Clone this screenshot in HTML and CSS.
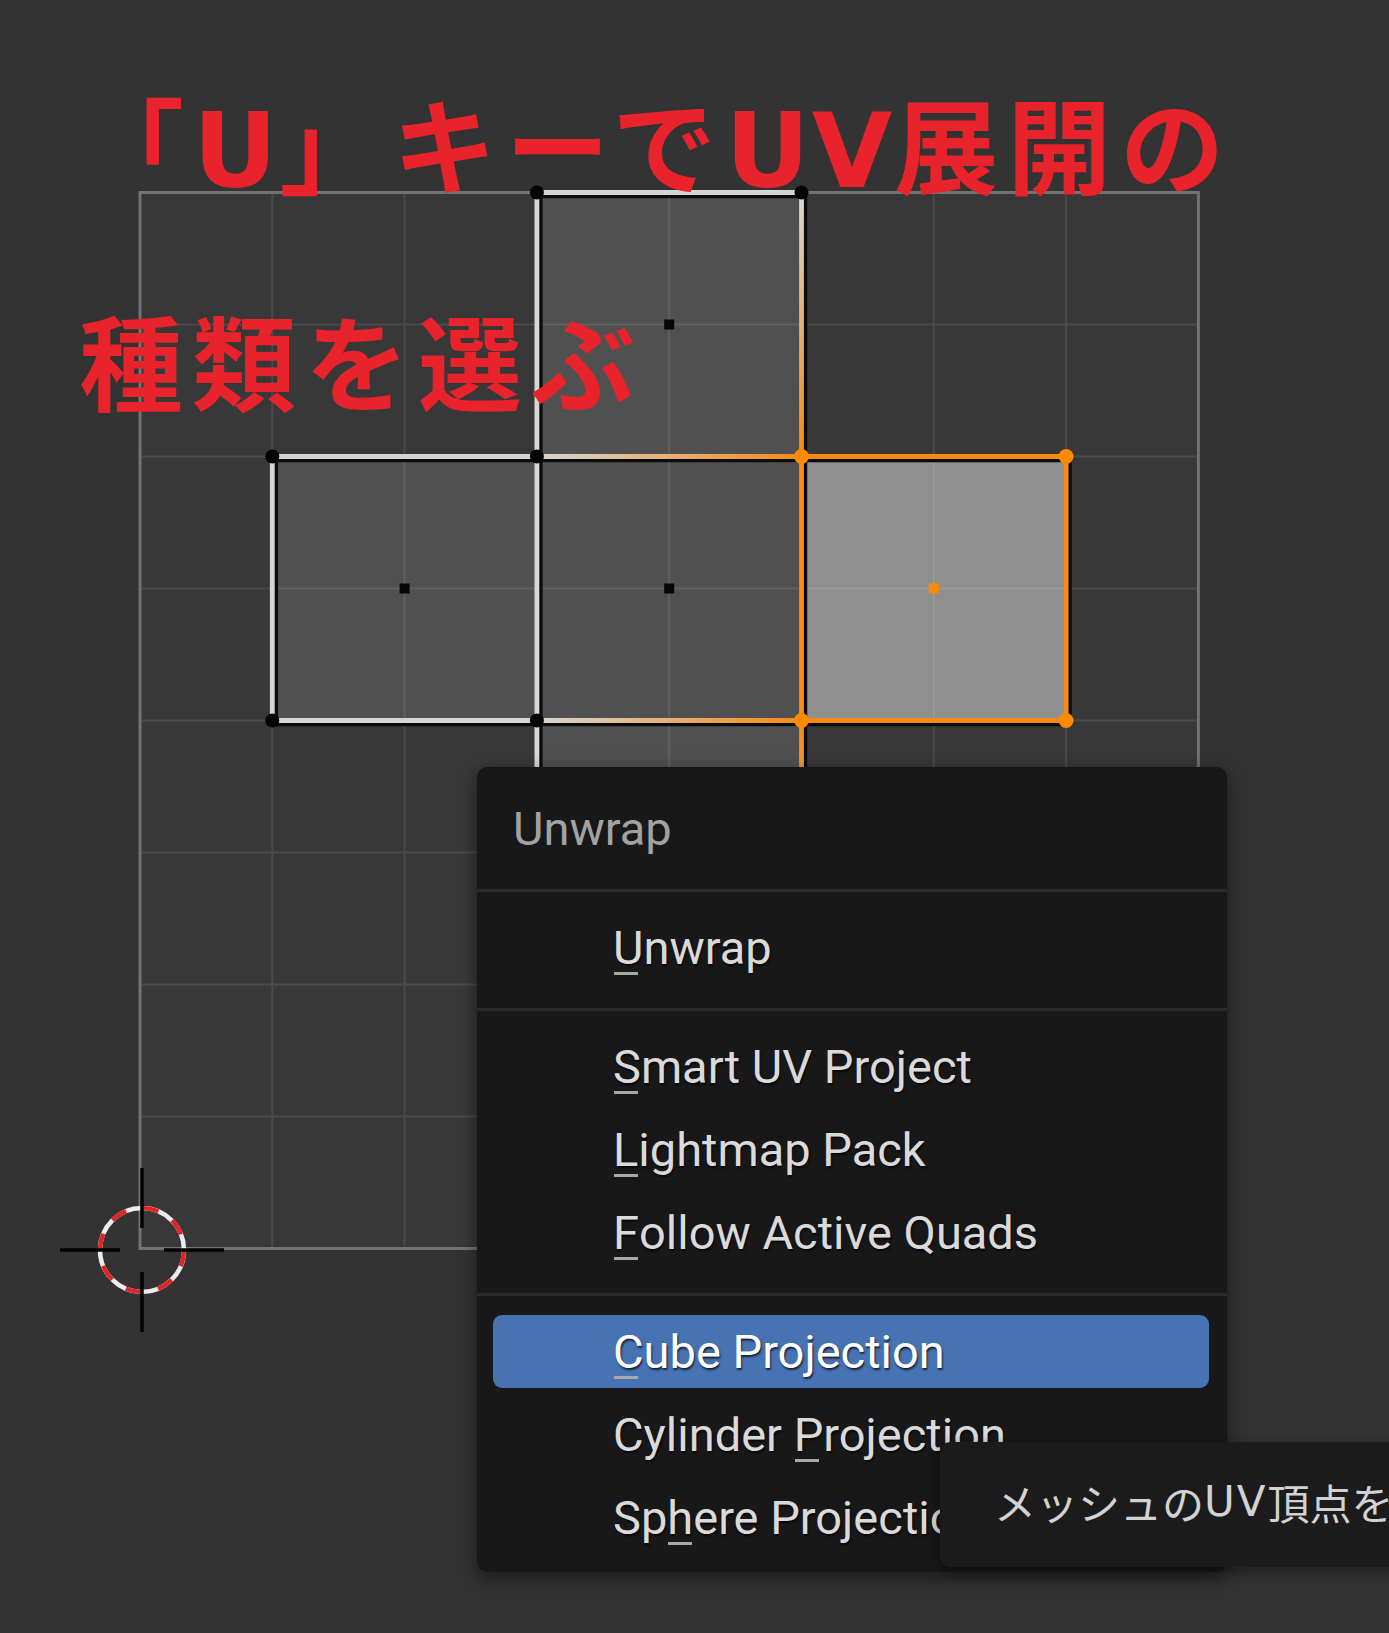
FILE: index.html
```html
<!DOCTYPE html>
<html lang="ja">
<head>
<meta charset="utf-8">
<title>UV Unwrap</title>
<link rel="stylesheet" href="styles.css">
</head>
<body>
<div class="editor">
  <svg class="uv-canvas" width="1389" height="1633" viewBox="0 0 1389 1633" xmlns="http://www.w3.org/2000/svg">
    <defs>
      <linearGradient id="gUpRight" gradientUnits="userSpaceOnUse" x1="801.5" y1="192.5" x2="801.5" y2="456.5">
        <stop offset="0" stop-color="#d6d6d6"/>
        <stop offset="1" stop-color="#f68a12"/>
      </linearGradient>
      <linearGradient id="gMidTop" gradientUnits="userSpaceOnUse" x1="536.9" y1="456.5" x2="801.5" y2="456.5">
        <stop offset="0" stop-color="#d6d6d6"/>
        <stop offset="1" stop-color="#f68a12"/>
      </linearGradient>
      <linearGradient id="gDownRight" gradientUnits="userSpaceOnUse" x1="801.5" y1="720.5" x2="801.5" y2="984.5">
        <stop offset="0" stop-color="#f68a12"/>
        <stop offset="1" stop-color="#d6d6d6"/>
      </linearGradient>
    </defs>

    <!-- UV 0-1 area -->
    <rect x="140" y="192.5" width="1058.4" height="1056" fill="#383838"/>
    <g stroke="#4a4a4a" stroke-width="2">
      <line x1="272.3" y1="192.5" x2="272.3" y2="1248.5"/>
      <line x1="404.6" y1="192.5" x2="404.6" y2="1248.5"/>
      <line x1="536.9" y1="192.5" x2="536.9" y2="1248.5"/>
      <line x1="669.2" y1="192.5" x2="669.2" y2="1248.5"/>
      <line x1="801.5" y1="192.5" x2="801.5" y2="1248.5"/>
      <line x1="933.8" y1="192.5" x2="933.8" y2="1248.5"/>
      <line x1="1066.1" y1="192.5" x2="1066.1" y2="1248.5"/>
      <line x1="140" y1="324.5" x2="1198.4" y2="324.5"/>
      <line x1="140" y1="456.5" x2="1198.4" y2="456.5"/>
      <line x1="140" y1="588.5" x2="1198.4" y2="588.5"/>
      <line x1="140" y1="720.5" x2="1198.4" y2="720.5"/>
      <line x1="140" y1="852.5" x2="1198.4" y2="852.5"/>
      <line x1="140" y1="984.5" x2="1198.4" y2="984.5"/>
      <line x1="140" y1="1116.5" x2="1198.4" y2="1116.5"/>
    </g>
    <rect x="140" y="192.5" width="1058.4" height="1056" fill="none" stroke="#727272" stroke-width="3"/>

    <!-- faces -->
    <g fill="rgba(255,255,255,0.12)">
      <rect x="536.9" y="192.5" width="264.6" height="264"/>
      <rect x="272.3" y="456.5" width="264.6" height="264"/>
      <rect x="536.9" y="456.5" width="264.6" height="264"/>
      <rect x="536.9" y="720.5" width="264.6" height="264"/>
      <rect x="536.9" y="984.5" width="264.6" height="264"/>
    </g>
    <rect x="801.5" y="456.5" width="264.6" height="264" fill="rgba(255,255,255,0.44)"/>

    <!-- edge shadows -->
    <g stroke="#0c0c0c" stroke-width="6.5" transform="translate(2.5 2.5)" stroke-linecap="square">
      <line x1="536.9" y1="192.5" x2="801.5" y2="192.5"/>
      <line x1="536.9" y1="192.5" x2="536.9" y2="1248.5"/>
      <line x1="801.5" y1="192.5" x2="801.5" y2="1248.5"/>
      <line x1="272.3" y1="456.5" x2="1066.1" y2="456.5"/>
      <line x1="272.3" y1="720.5" x2="1066.1" y2="720.5"/>
      <line x1="272.3" y1="456.5" x2="272.3" y2="720.5"/>
      <line x1="1066.1" y1="456.5" x2="1066.1" y2="720.5"/>
    </g>
    <!-- edges -->
    <g stroke-width="4.8">
      <line x1="536.9" y1="192.5" x2="801.5" y2="192.5" stroke="#d6d6d6"/>
      <line x1="536.9" y1="192.5" x2="536.9" y2="1248.5" stroke="#d6d6d6"/>
      <line x1="272.3" y1="456.5" x2="536.9" y2="456.5" stroke="#d6d6d6"/>
      <line x1="272.3" y1="720.5" x2="536.9" y2="720.5" stroke="#d6d6d6"/>
      <line x1="272.3" y1="456.5" x2="272.3" y2="720.5" stroke="#d6d6d6"/>
      <line x1="801.5" y1="192.5" x2="801.5" y2="456.5" stroke="url(#gUpRight)"/>
      <line x1="536.9" y1="456.5" x2="801.5" y2="456.5" stroke="url(#gMidTop)"/>
      <line x1="536.9" y1="720.5" x2="801.5" y2="720.5" stroke="url(#gMidTop)"/>
      <line x1="801.5" y1="720.5" x2="801.5" y2="984.5" stroke="url(#gDownRight)"/>
      <line x1="801.5" y1="984.5" x2="801.5" y2="1248.5" stroke="#d6d6d6"/>
      <g stroke="#f68a12">
        <line x1="801.5" y1="456.5" x2="1066.1" y2="456.5"/>
        <line x1="801.5" y1="720.5" x2="1066.1" y2="720.5"/>
        <line x1="801.5" y1="456.5" x2="801.5" y2="720.5"/>
        <line x1="1066.1" y1="456.5" x2="1066.1" y2="720.5"/>
      </g>
    </g>

    <!-- vertices -->
    <g fill="#050505">
      <circle cx="536.9" cy="192.5" r="7"/>
      <circle cx="801.5" cy="192.5" r="7"/>
      <circle cx="272.3" cy="456.5" r="7"/>
      <circle cx="536.9" cy="456.5" r="7"/>
      <circle cx="272.3" cy="720.5" r="7"/>
      <circle cx="536.9" cy="720.5" r="7"/>
      <circle cx="536.9" cy="984.5" r="7"/>
      <circle cx="801.5" cy="984.5" r="7"/>
    </g>
    <g fill="#ff8a00">
      <circle cx="801.5" cy="456.5" r="7.5"/>
      <circle cx="1066.1" cy="456.5" r="7.5"/>
      <circle cx="801.5" cy="720.5" r="7.5"/>
      <circle cx="1066.1" cy="720.5" r="7.5"/>
    </g>
    <!-- face dots -->
    <g fill="#050505">
      <rect x="664.2" y="319.5" width="10" height="10"/>
      <rect x="399.6" y="583.5" width="10" height="10"/>
      <rect x="664.2" y="583.5" width="10" height="10"/>
    </g>
    <rect x="928.8" y="583.5" width="10" height="10" fill="#ff8a00"/>

    <!-- 2D cursor -->
    <circle cx="142" cy="1250" r="42" fill="none" stroke="#ececec" stroke-width="4.5"/>
    <circle cx="142" cy="1250" r="42" fill="none" stroke="#e0242a" stroke-width="4.5" stroke-dasharray="16.49 16.49"/>
    <g stroke="#000" stroke-width="3.5">
      <line x1="60" y1="1250" x2="120" y2="1250"/>
      <line x1="164" y1="1250" x2="224" y2="1250"/>
      <line x1="142" y1="1168" x2="142" y2="1228"/>
      <line x1="142" y1="1272" x2="142" y2="1332"/>
    </g>
  </svg>

  <div class="note note-1">「<span class="note-latin">U</span>」キーで<span class="note-latin">UV</span>展開の</div>
  <div class="note note-2">種類を選ぶ</div>

  <div class="menu">
    <div class="menu-title">Unwrap</div>
    <div class="sep"></div>
    <div class="item"><span class="label"><span class="mn">U</span>nwrap</span></div>
    <div class="sep"></div>
    <div class="item"><span class="label"><span class="mn">S</span>mart UV Project</span></div>
    <div class="item"><span class="label"><span class="mn">L</span>ightmap Pack</span></div>
    <div class="item"><span class="label"><span class="mn">F</span>ollow Active Quads</span></div>
    <div class="sep"></div>
    <div class="item active"><span class="label"><span class="mn">C</span>ube Projection</span></div>
    <div class="item"><span class="label">Cylinder <span class="mn">P</span>rojection</span></div>
    <div class="item"><span class="label">Sp<span class="mn">h</span>ere Projection</span></div>
  </div>

  <div class="tooltip">メッシュの<span class="tip-latin">UV</span>頂点を立方体に投影</div>
</div>
</body>
</html>
```

FILE: styles.css
```css
html, body {
  margin: 0;
  padding: 0;
  background: #333333;
  overflow: hidden;
}

.editor {
  position: relative;
  width: 1389px;
  height: 1633px;
  overflow: hidden;
  background: #333333;
}

.uv-canvas {
  position: absolute;
  left: 0;
  top: 0;
  display: block;
}

.note {
  position: absolute;
  font-family: "Noto Sans CJK JP", "Noto Sans", sans-serif;
  font-weight: 700;
  font-size: 104px;
  line-height: 1;
  letter-spacing: 9px;
  color: #e8232b;
  white-space: nowrap;
}

.note-latin {
  font-family: "DejaVu Sans", "Noto Sans CJK JP", sans-serif;
  letter-spacing: 2px;
}

.note-1 {
  left: 80px;
  top: 90px;
}

.note-2 {
  left: 79px;
  top: 307px;
}

.menu {
  position: absolute;
  left: 477px;
  top: 767px;
  width: 750px;
  height: 805px;
  box-sizing: border-box;
  padding: 20px 0 13px;
  display: flex;
  flex-direction: column;
  background: #181818;
  border-radius: 10px;
  box-shadow: 0 6px 18px rgba(0, 0, 0, 0.5);
  font-family: Roboto, "Liberation Sans", sans-serif;
  font-size: 47px;
}

.menu-title {
  height: 83px;
  flex: none;
  display: flex;
  align-items: center;
  padding-left: 36px;
  color: #a2a2a2;
}

.sep {
  flex: none;
  height: 3px;
  margin: 19px 0 14px;
  background: #2b2b2b;
}

.item {
  flex: none;
  height: 83px;
  box-sizing: border-box;
  padding: 5px 18px 5px 16px;
  display: flex;
}

.label {
  flex: 1;
  display: flex;
  align-items: center;
  padding-left: 120px;
  border-radius: 9px;
  color: #dadada;
  white-space: pre;
  text-shadow: 1px 2px 2px rgba(0, 0, 0, 0.7);
}

.item.active .label {
  background: #4772b3;
  color: #ffffff;
}

.mn {
  position: relative;
}

.mn::after {
  content: "";
  position: absolute;
  left: 1px;
  bottom: 0;
  width: 24px;
  height: 3px;
  background: #a8a8a8;
}

.tooltip {
  position: absolute;
  left: 940px;
  top: 1442px;
  width: 640px;
  height: 125px;
  box-sizing: border-box;
  padding: 0 0 6px 54px;
  display: flex;
  align-items: center;
  background: #1b1b1b;
  border-radius: 10px;
  box-shadow: 0 4px 14px rgba(0, 0, 0, 0.45);
  font-family: "Noto Sans CJK JP", "Noto Sans", sans-serif;
  font-size: 42px;
  color: #d2d2d2;
  white-space: nowrap;
}

.tip-latin {
  font-family: "DejaVu Sans", "Noto Sans CJK JP", sans-serif;
  letter-spacing: 2px;
}
```
